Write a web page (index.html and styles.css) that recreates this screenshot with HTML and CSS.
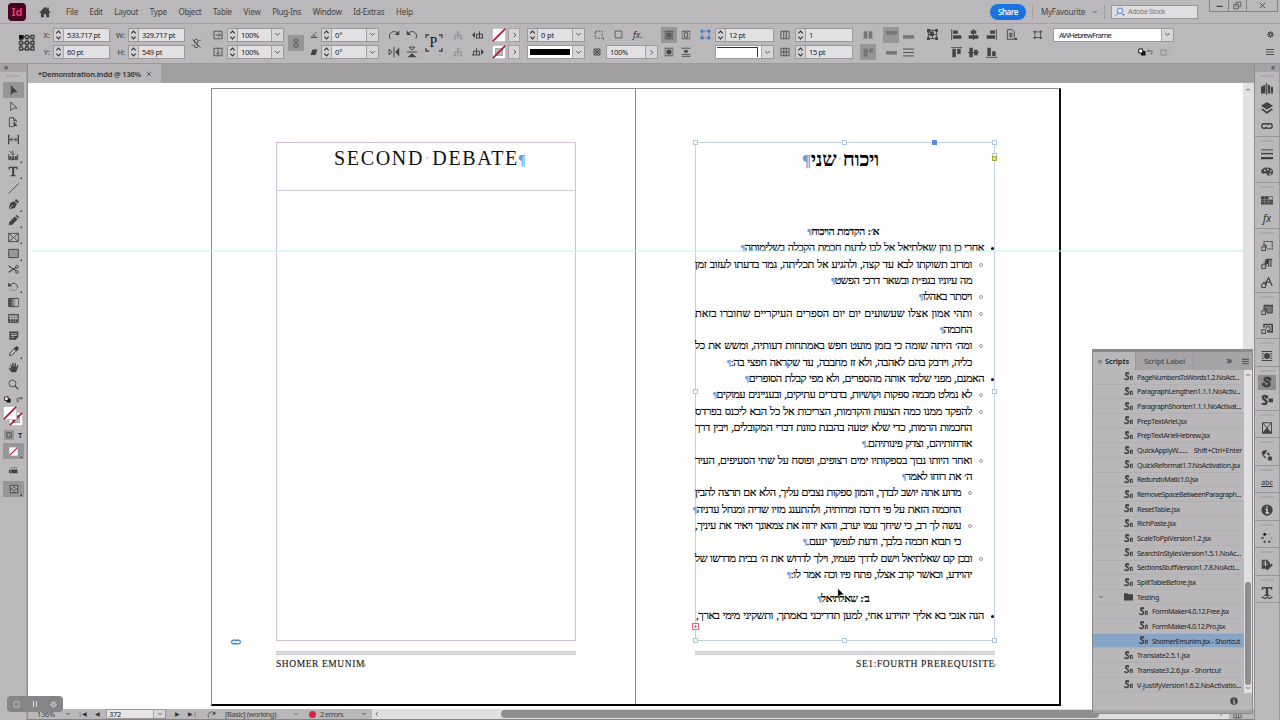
FILE: index.html
```
<!DOCTYPE html>
<html lang="en">
<head>
    <meta charset="UTF-8">
    <meta name="viewport" content="width=device-width, initial-scale=1.0">
    <title>Demonstration.indd</title>
    <link rel="stylesheet" href="styles.css">
</head>
<body>
    <svg class="defs" xmlns="http://www.w3.org/2000/svg">
        <symbol id="home" viewBox="0 0 16 16"><path class="f" d="M8 1 0 9h2.500v6H6.500v-4h3v4h4V9H16L13 6V2h-2v2z"/></symbol>
        <symbol id="down" viewBox="0 0 16 16"><path d="m3 5 5 5 5-5"/></symbol>
        <symbol id="right" viewBox="0 0 16 16"><path d="m6 3 5 5-5 5"/></symbol>
        <symbol id="up" viewBox="0 0 16 16"><path d="m3 10 5-5 5 5"/></symbol>
        <symbol id="left" viewBox="0 0 16 16"><path d="m10 3-5 5 5 5"/></symbol>
        <symbol id="spin" viewBox="0 0 10 14"><path d="m2.500 5 2.500-2.500L7.500 5M2.500 9 5 11.500 7.500 9"/></symbol>
        <symbol id="refgrid" viewBox="0 0 18 18"><path d="M3 3h12v12H3zM3 9h12M9 3v12"/><path class="w" d="M7.500 1.500h3v3h-3zM13 1.500h3v3h-3zM1.500 7.500h3v3h-3zM7.500 7.500h3v3h-3zM13 7.500h3v3h-3zM1.500 13h3v3h-3zM7.500 13h3v3h-3zM13 13h3v3h-3z"/><path class="k" d="M1 1h4.500v4.500H1z"/></symbol>
        <symbol id="unlink" viewBox="0 0 16 16"><path d="M5 7V4q0-2 2.500-2T10 4v3M5 10v2q0 2 2.500 2T10 12v-2M7.500 6v4M2 2l12 12M12 4l2-1M1 11l2-1"/></symbol>
        <symbol id="chain" viewBox="0 0 16 16"><path d="M5 7V4q0-3 3-3t3 3v3M5 9v3q0 3 3 3t3-3V9M8 5v6"/></symbol>
        <symbol id="scalex" viewBox="0 0 16 16"><path d="M1.500 2v12h13V2zM4 8h8M9 5l3 3-3 3"/></symbol>
        <symbol id="scaley" viewBox="0 0 16 16"><path d="M1.500 2v12h13V2zM8 4v8M5 9l3 3 3-3"/></symbol>
        <symbol id="angle" viewBox="0 0 16 16"><path d="M13 2 2 13h13M7 8q3 1 3 5"/></symbol>
        <symbol id="shear" viewBox="0 0 16 16"><path class="f" d="M5 3h10l-4 11H1z"/></symbol>
        <symbol id="cw" viewBox="0 0 16 16"><path d="M3 13A6 6 0 1 1 13 6"/><path class="f" d="M15 2v6H9z"/></symbol>
        <symbol id="ccw" viewBox="0 0 16 16"><path d="M13 13A6 6 0 1 0 3 6"/><path class="f" d="M1 2v6h6z"/></symbol>
        <symbol id="fliph" viewBox="0 0 16 16"><path d="M1.500 4v8l4-4zM8 1v14"/><path class="f" d="M15 2v12L9.500 8z"/></symbol>
        <symbol id="flipv" viewBox="0 0 16 16"><path d="M4 1.500h8l-4 4zM1 8h14"/><path class="f" d="M2 15h12L8 9.500z"/></symbol>
        <symbol id="pbox" viewBox="0 0 18 18"><path d="M1 4V1h3M14 1h3v3M1 14v3h3M14 17h3v-3"/></symbol>
        <symbol id="tree" viewBox="0 0 16 16"><path d="M8 2v12M3 14V8h10v6M6 4l2-2 2 2M1 14h4M11 14h4"/></symbol>
        <symbol id="treel" viewBox="0 0 16 16"><path d="M6 12V7M10 12V3M14 12V7M5 12h10M6 7h8"/><path class="f" d="M4 4v8L0 8z"/></symbol>
        <symbol id="treer" viewBox="0 0 16 16"><path d="M2 12V7M6 12V3M10 12V7M0 12h11M2 7h8"/><path class="f" d="M12 4v8l4-4z"/></symbol>
        <symbol id="none" viewBox="0 0 16 16"><path class="wh" d="M0 0h16v16H0z"/><path class="red" d="M1 15 15 1"/></symbol>
        <symbol id="nonestroke" viewBox="0 0 16 16"><path class="wh" d="M0 0h16v16H0z"/><path class="gr" d="M4 4h8v8H4z"/><path class="red" d="M1 15 15 1"/></symbol>
        <symbol id="corner" viewBox="0 0 16 16"><path stroke-dasharray="3 2" d="M2 2h11v11H2z"/><path class="f" d="M14 13h2v2h-2z"/></symbol>
        <symbol id="sq" viewBox="0 0 16 16"><path d="M2 2h12v12H2z"/></symbol>
        <symbol id="opac" viewBox="0 0 16 16"><path d="M2 2h12v12H2zM2 2l12 12M14 2 2 14M8 2v12M2 8h12"/></symbol>
        <symbol id="wrap1" viewBox="0 0 16 16"><path d="M1 2h14M1 5h14M1 8h14M1 11h14M1 14h14"/><path class="f" d="M5 5h6v6H5z" opacity=".6"/></symbol>
        <symbol id="wrap2" viewBox="0 0 16 16"><path d="M1 2h14M1 5h2M13 5h2M1 8h2M13 8h2M1 11h2M13 11h2M1 14h14M5.500 4.500h5v7h-5z"/></symbol>
        <symbol id="wrap3" viewBox="0 0 16 16"><path d="M1 2h14M1 5h3M12 5h3M1 8h2M13 8h2M1 11h3M12 11h3M1 14h14"/><circle class="f" cx="8" cy="8" r="4"/></symbol>
        <symbol id="wrap4" viewBox="0 0 16 16"><path d="M1 2h14M1 12h14M1 15h14"/><path class="f" d="M5 5h6v4H5z"/></symbol>
        <symbol id="fit" viewBox="0 0 16 16"><path stroke-dasharray="2 1" d="M3 3h10v10H3z"/><path class="f" d="M1 1h4v4H1zM11 1h4v4h-4zM1 11h4v4H1zM11 11h4v4h-4z"/></symbol>
        <symbol id="cols" viewBox="0 0 16 16"><path d="M1.500 2h13v12h-13zM6 2v12M10 2v12"/></symbol>
        <symbol id="gut" viewBox="0 0 16 16"><path d="M1.500 2h13v12h-13zM6 2v12M10 2v12M2 8h12"/></symbol>
        <symbol id="bal" viewBox="0 0 16 16"><path class="f dim" d="M1 2h6v12H1zM9 2h6v12H9z"/></symbol>
        <symbol id="bal2" viewBox="0 0 16 16"><path class="f dim" d="M1 2h6v12H1zM9 2h6v6H9z"/></symbol>
        <symbol id="vtop" viewBox="0 0 16 16"><path class="f dim" d="M0 3h16v5H0z"/></symbol>
        <symbol id="vmid" viewBox="0 0 16 16"><path class="f dim" d="M0 6h16v5H0z"/></symbol>
        <symbol id="vbot" viewBox="0 0 16 16"><path class="f dim" d="M0 9h16v5H0z"/></symbol>
        <symbol id="bars" viewBox="0 0 16 16"><path d="M0 3h16M0 8h16M0 13h16"/></symbol>
        <symbol id="autosize" viewBox="0 0 16 16"><path d="M2 2h12v12H2zM8 2v12M2 8h12"/><path class="f" d="M0 0h5v5H0zM4 4h6v6H4zM12 0h4v4h-4zM0 12h4v4H0zM12 12h4v4h-4z"/></symbol>
        <symbol id="al" viewBox="0 0 16 16"><path d="M1 0v16"/><path class="f" d="M3 2h7v5H3zM3 9h12v5H3z"/></symbol>
        <symbol id="ac" viewBox="0 0 16 16"><path d="M8 0v16"/><path class="f" d="M4 2h8v5H4zM1 9h14v5H1z"/></symbol>
        <symbol id="ar" viewBox="0 0 16 16"><path d="M15 0v16"/><path class="f" d="M6 2h7v5H6zM1 9h12v5H1z"/></symbol>
        <symbol id="at" viewBox="0 0 16 16"><path d="M0 1h16"/><path class="f" d="M2 3h5v12H2zM9 3h5v7H9z"/></symbol>
        <symbol id="am" viewBox="0 0 16 16"><path d="M0 8h16"/><path class="f" d="M2 1h5v14H2zM9 4h5v8H9z"/></symbol>
        <symbol id="ab" viewBox="0 0 16 16"><path d="M0 15h16"/><path class="f" d="M2 1h5v12H2zM9 6h5v7H9z"/></symbol>
        <symbol id="doc" viewBox="0 0 16 16"><path d="M2 1h7l3 3v11H2zM4 7h6M4 10h6M7 5v8"/><path class="f" d="M13 13h3v3h-3z"/></symbol>
        <symbol id="frame" viewBox="0 0 16 16"><path d="M3 3h9v9H3z"/><path class="f" d="M1 1h3v3H1zM11 1h3v3h-3zM1 11h3v3H1zM11 11h3v3h-3z"/></symbol>
        <symbol id="swap" viewBox="0 0 16 16"><path class="k" d="M6 6h9v9H6z"/><path fill="#fff" stroke="#111" stroke-width="2" d="M1.500 2h8v8h-8z"/></symbol>
        <symbol id="undo" viewBox="0 0 16 16"><path d="M5 2 2 5l3 3M2 5h8q4 0 4 4t-5 4"/></symbol>
        <symbol id="gear" viewBox="0 0 16 16"><circle cx="8" cy="8" r="4" stroke-width="3"/><path d="M8 0v4M8 12v4M0 8h4M12 8h4M2.500 2.500 5 5M11 11l2.500 2.500M13.500 2.500 11 5M5 11l-2.500 2.500" stroke-width="2.200"/></symbol>
        <symbol id="search" viewBox="0 0 16 16"><circle cx="8" cy="6" r="4.500"/><path d="m5 9-4 5"/><path class="f" d="M11 11h5l-2.500 3z"/></symbol>
        <symbol id="min" viewBox="0 0 16 16"><path stroke-width="3" d="M1 10h14"/></symbol>
        <symbol id="restore" viewBox="0 0 16 16"><path d="M1.500 6h8v8h-8zM6 6V2h8v8h-4M4 9h3"/></symbol>
        <symbol id="close" viewBox="0 0 16 16"><path d="m2 2 12 12M14 2 2 14"/></symbol>
        <!-- tools -->
        <symbol id="t-sel" viewBox="0 0 16 16"><path class="f" d="M4 0v15l4-4 6-1z"/></symbol>
        <symbol id="t-dir" viewBox="0 0 16 16"><path d="M4 1.500V14l3.500-3.500 5.500-.5z"/></symbol>
        <symbol id="t-page" viewBox="0 0 16 16"><path d="M7 14H2V1h6l4 4v3M8 1v4h4"/><path class="f" d="M8 6v9l2-2 4 0z"/></symbol>
        <symbol id="t-gap" viewBox="0 0 16 16"><path stroke-width="2" d="M1 1v14M15 1v14"/><path d="M3 8h10M6 5 3 8l3 3M10 5l3 3-3 3"/></symbol>
        <symbol id="t-cc" viewBox="0 0 16 16"><path d="M1 6v8h13V6M7 1v6M4.500 5 7 7.500 9.500 5M2 2l3 2"/><path class="f" d="M2 9h3v4H2zM6 9h3v4H6zM10 9h3v4h-3z"/></symbol>
        <symbol id="t-type" viewBox="0 0 16 16"><path class="f" d="M1 1h13v4h-1.500L12 3H9v10l2 .5V15H4v-1.500L6 13V3H3l-.5 2H1z"/></symbol>
        <symbol id="t-line" viewBox="0 0 16 16"><path d="M1 15 15 1"/></symbol>
        <symbol id="t-pen" viewBox="0 0 16 16"><path class="f" d="M1 15 3 6l6-3 4 4-3 6zM10 2l2-2 4 4-2 2z"/><path stroke="#bbb9bb" d="m2 14 5-5"/></symbol>
        <symbol id="t-pencil" viewBox="0 0 16 16"><path class="f" d="m1 15 1-5 8-8 4 4-8 8zM11 1l2-1 3 3-1 2z"/></symbol>
        <symbol id="t-xframe" viewBox="0 0 16 16"><path d="M1 2h14v12H1zM1 2l14 12M15 2 1 14"/></symbol>
        <symbol id="t-rect" viewBox="0 0 16 16"><path fill="#999" d="M1 2h14v12H1z"/></symbol>
        <symbol id="t-cut" viewBox="0 0 16 16"><path stroke-width="1.600" d="M1 3l11 7M1 12l11-7"/><circle cx="13" cy="4" r="2"/><circle cx="13" cy="11.500" r="2"/></symbol>
        <symbol id="t-rot" viewBox="0 0 16 16"><path d="M3 6a6 6 0 0 1 11 3"/><path stroke-dasharray="1.500 1.500" d="M14 9a6 6 0 0 1-11 2"/><path class="f" d="M0 2v6h6z"/></symbol>
        <linearGradient id="g"><stop offset="0" stop-color="#333"/><stop offset="1" stop-color="#ddd"/></linearGradient>
        <symbol id="t-grad" viewBox="0 0 16 16"><path fill="url(#g)" d="M1 2h14v12H1z"/></symbol>
        <symbol id="t-feather" viewBox="0 0 16 16"><path fill="#888" d="M1 2h14v12H1z"/><path stroke="#333" stroke-dasharray="2 1.500" stroke-width="3" d="M1 11h14"/><path stroke="#ddd" stroke-dasharray="2 2" d="M2 5h12M3 8h12"/></symbol>
        <symbol id="t-note" viewBox="0 0 16 16"><path class="f" d="M2 2h13v8l-4 4H2z"/><path stroke="#bbb" d="M4 5.500h9M4 8h9M4 10.500h5"/></symbol>
        <symbol id="t-drop" viewBox="0 0 16 16"><path d="m2 14 1-4 6-6 3 3-6 6z"/><path class="f" d="m8 3 5 5 1-2 2-3-3-3-3 2z"/></symbol>
        <symbol id="t-hand" viewBox="0 0 16 16"><path class="f" d="M5 15 1 9l1-1 3 2L3 4l1.500-.5L6.500 8 6 1h1.700L9 7.500 10 1.500h1.600L11.500 8 14 4l1.200.8L13 12l-1.500 3z"/></symbol>
        <symbol id="t-zoom" viewBox="0 0 16 16"><circle cx="6.500" cy="6.500" r="5"/><path stroke-width="1.800" d="m10 10 5 5"/></symbol>
        <symbol id="t-preview" viewBox="0 0 16 16"><path stroke-dasharray="2 1" d="M3 3h12"/><path class="f" d="M0 6h3v7H0zM4 6h11v7H4z"/></symbol>
        <symbol id="t-mode" viewBox="0 0 16 16"><path fill="#777" d="M2 2h12v12H2z"/><path stroke="#ddd" d="M4 6V4h2M10 4h2v2M4 10v2h2M10 12h2v-2M6 8h4"/></symbol>
        <!-- dock panels -->
        <symbol id="d-pages" viewBox="0 0 16 16"><path class="f" d="M0 5l6-3v12H0zM9 2l3 1v11H9zM13 5h3v9h-3z"/><path d="M7.500 0v16"/></symbol>
        <symbol id="d-layers" viewBox="0 0 16 16"><path class="f" d="M8 0l8 5-8 5-8-5z"/><path class="f" d="m0 10 2-1.500 6 4 6-4 2 1.500-8 5.500z"/></symbol>
        <symbol id="d-links" viewBox="0 0 16 16"><path stroke-width="1.800" d="M7 11H4q-3 0-3-3t3-3h3q2.500 0 3 2M9 5h3q3 0 3 3t-3 3H9q-2.500 0-3-2"/></symbol>
        <symbol id="d-stroke" viewBox="0 0 16 16"><path d="M0 2.500h16"/><path stroke-width="2" d="M0 7.500h16"/><path stroke-width="3" d="M0 13.500h16"/></symbol>
        <symbol id="d-color" viewBox="0 0 16 16"><path class="f" d="M8 2c6 0 8 3 8 6s-2 5-6 5c-2 0-1-2-3-3s-3 1-5 0c-4-2-1-8 6-8z"/><g fill="#bbb" stroke="none"><circle cx="5" cy="6" r="1.300"/><circle cx="9" cy="4.500" r="1.300"/><circle cx="13" cy="6.500" r="1.300"/><circle cx="12" cy="10.500" r="1.300"/></g></symbol>
        <symbol id="d-swatch" viewBox="0 0 16 16"><path class="f" d="M0 3h16v11H0z"/><path class="gr" d="M11 4h4v3h-4z"/><path stroke="#999" stroke-width=".8" d="M5 3v11M10 3v11M0 7.500h16M0 10.500h16"/></symbol>
        <symbol id="d-obj" viewBox="0 0 16 16"><path stroke-dasharray="3 1" stroke-width="1.500" d="M4 7V2h11v10H8"/><path d="M1 9h5v5H1zM3 7h4v4"/></symbol>
        <symbol id="d-para" viewBox="0 0 16 16"><path class="f" d="M15 1v1.500h-1V12h-1.500V2.500H11V12H9.500V8Q5 8 5 4.500T9 1z"/><path d="M1 9h5v5H1zM3 7h4v4"/></symbol>
        <symbol id="d-char" viewBox="0 0 16 16"><path stroke-width="1.600" d="m6 9 4-8 5 11M8 7h5"/><path d="M1 9h5v5H1zM3 7h4v4"/></symbol>
        <symbol id="d-cell" viewBox="0 0 16 16"><path fill="#777" d="M4 7V2h11v10H8V7z"/><path class="f" d="M4 1h12v2H4z"/><path d="M1 9h5v5H1zM3 7h4v4"/></symbol>
        <symbol id="d-table" viewBox="0 0 16 16"><path stroke-width="2" d="M4 6V2h11v10H8"/><path d="M7 8V5h5v5H8M1 9h5v5H1z"/></symbol>
        <symbol id="d-script" viewBox="0 0 16 16"><path stroke-width="3.600" d="M11.500 5.500C11.500 1.500 5 1.500 5 4.800s6.500 2.700 6.500 6-6 3.500-7.500 1"/><circle class="f" cx="3.500" cy="11" r="2.500"/><circle class="f" cx="11.500" cy="4" r="2.500"/></symbol>
        <symbol id="d-label" viewBox="0 0 16 16"><path stroke-width="3.200" d="M7.500 5C7.500 1.500 2.500 2 2.500 5s5.500 2.700 5 6-5 3-6 1"/><circle class="f" cx="7.500" cy="4" r="2.200"/><path class="f" d="M10 6h6v5h-6z"/></symbol>
        <symbol id="d-env" viewBox="0 0 16 16"><path d="M2 1h12v14H2z"/><path d="m2 1 12 14M14 1 2 15"/><path class="f" d="M2 15h12L8 8z"/></symbol>
        <symbol id="d-hyper" viewBox="0 0 16 16"><path class="f" d="M1 4q3-4 7-2L6 6 3 8q3 1 4 5-6-3-6-9zM9 4l3 3-1 2-3-2z"/><circle class="f" cx="12" cy="12.500" r="3"/></symbol>
        <symbol id="d-info" viewBox="0 0 16 16"><circle class="f" cx="8" cy="8" r="7.500"/><path stroke="#ccc" stroke-width="2" d="M6 7h2v5M6 12h5M8 3v2"/></symbol>
        <symbol id="d-dots" viewBox="0 0 16 16"><g stroke="none" fill="#555"><circle cx="5" cy="3" r="2" fill="#222"/><circle cx="11" cy="3" r="1.700" fill="#aaa"/><circle cx="14" cy="8" r="1.700" fill="#999"/><circle cx="11" cy="13" r="1.700"/><circle cx="5" cy="13" r="1.700"/><circle cx="2" cy="8" r="1.700"/></g></symbol>
        <symbol id="d-pre" viewBox="0 0 16 16"><path class="f" d="M1 1h7l4 4v4l-4 4H1z"/><path stroke="#bbb" d="M3 4h4M3 7h6M6 2v8"/><path stroke-width="2.500" d="m7 14 2-1 6-6"/></symbol>
        <symbol id="d-text" viewBox="0 0 16 16"><path class="f" d="M1 0h14v4h-1.500L13 2H9.500v8l2 .5V12h-7v-1.500l2-.5V2H3l-.5 2H1z"/><path stroke-width="1.400" d="M1 14.500q1.500-2 3 0t3 0 3 0 3 0 2 0"/></symbol>
        <symbol id="s-file" viewBox="0 0 16 16"><path stroke-width="2.800" d="M8 4.500C8 1 3 1.500 3 4.500s5.500 2.500 5 6-5 3.500-6 1.500"/><path stroke-width="1.800" d="M3 1.500h6M0 12h3"/><path stroke-width="2" d="M11.500 7v7M11 7.500h3.500V14"/></symbol>
        <symbol id="s-folder" viewBox="0 0 16 16"><path class="f" d="M0 2h6l1.500 2H16v11H0z"/></symbol>
    </svg>

    <div class="app">
        <header class="menubar">
            <div class="logo">Id</div>
            <svg class="i home"><use href="#home"/></svg>
            <nav class="menu">
                <a data-w="12">File</a>
                <a data-w="13">Edit</a>
                <a data-w="24">Layout</a>
                <a data-w="17">Type</a>
                <a data-w="23">Object</a>
                <a data-w="19">Table</a>
                <a data-w="17">View</a>
                <a data-w="29">Plug-Ins</a>
                <a data-w="29">Window</a>
                <a data-w="31">Id-Extras</a>
                <a data-w="17">Help</a>
            </nav>
            <button class="share"><span data-w="20">Share</span></button>
            <div class="workspace-name"><span data-w="44">MyFavourite</span><svg class="i s6"><use href="#down"/></svg></div>
            <div class="stock"><svg class="i s10"><use href="#search"/></svg><span data-w="37">Adobe Stock</span></div>
            <div class="winbtns">
                <span><svg class="i s7"><use href="#min"/></svg></span>
                <span><svg class="i s9"><use href="#restore"/></svg></span>
                <span><svg class="i s7"><use href="#close"/></svg></span>
            </div>
        </header>

        <section class="controls">
            <div class="tall ref"><svg class="i s18"><use href="#refgrid"/></svg></div>
            <label>X:</label><label>Y:</label>
            <div class="field"><svg class="spin"><use href="#spin"/></svg><span class="val" data-w="33">533.717 pt</span></div>
            <div class="field"><svg class="spin"><use href="#spin"/></svg><span class="val" data-w="16">60 pt</span></div>
            <label>W:</label><label>H:</label>
            <div class="field"><svg class="spin"><use href="#spin"/></svg><span class="val" data-w="33">329.717 pt</span></div>
            <div class="field"><svg class="spin"><use href="#spin"/></svg><span class="val" data-w="20">549 pt</span></div>
            <div class="tall"><svg class="i s11"><use href="#unlink"/></svg></div>
            <svg class="i s10"><use href="#scalex"/></svg><svg class="i s10"><use href="#scaley"/></svg>
            <div class="field"><svg class="spin"><use href="#spin"/></svg><span class="val" data-w="18">100%</span><b><svg class="i s7"><use href="#down"/></svg></b></div>
            <div class="field"><svg class="spin"><use href="#spin"/></svg><span class="val" data-w="18">100%</span><b><svg class="i s7"><use href="#down"/></svg></b></div>
            <div class="tall"><span class="pressed"><svg class="i s10"><use href="#chain"/></svg></span></div>
            <svg class="i s8"><use href="#angle"/></svg><svg class="i s8"><use href="#shear"/></svg>
            <div class="field"><svg class="spin"><use href="#spin"/></svg><span class="val">0°</span><b><svg class="i s7"><use href="#down"/></svg></b></div>
            <div class="field"><svg class="spin"><use href="#spin"/></svg><span class="val">0°</span><b><svg class="i s7"><use href="#down"/></svg></b></div>
            <i class="tall"></i>
            <svg class="i s12"><use href="#cw"/></svg><svg class="i s12"><use href="#fliph"/></svg>
            <svg class="i s12"><use href="#ccw"/></svg><svg class="i s12"><use href="#flipv"/></svg>
            <div class="tall pchar"><svg class="i s18"><use href="#pbox"/></svg><span>P</span></div>
            <svg class="i s10 faint"><use href="#tree"/></svg><svg class="i s10 faint"><use href="#tree"/></svg>
            <svg class="i s12"><use href="#treel"/></svg><svg class="i s12"><use href="#treer"/></svg>
            <i class="tall"></i>
            <div class="swatch"><svg class="i"><use href="#none"/></svg><b><svg class="i s7"><use href="#right"/></svg></b></div>
            <div class="swatch"><svg class="i"><use href="#nonestroke"/></svg><b><svg class="i s7"><use href="#right"/></svg></b></div>
            <i class="tall"></i>
            <div class="field"><svg class="spin"><use href="#spin"/></svg><span class="val" data-w="13">0 pt</span><b><svg class="i s7"><use href="#down"/></svg></b></div>
            <div class="field white"><span class="stroke-line"></span><b><svg class="i s7"><use href="#down"/></svg></b></div>
            <div class="fx"><svg class="i s10"><use href="#corner"/></svg><svg class="i s9"><use href="#sq"/></svg><em>fx.</em></div>
            <div class="opacity"><svg class="i s8"><use href="#opac"/></svg><div class="field"><span class="val" data-w="18">100%</span><b><svg class="i s7"><use href="#right"/></svg></b></div></div>
            <span class="pressed"><svg class="i s10"><use href="#wrap1"/></svg></span><svg class="i s10"><use href="#wrap3"/></svg>
            <svg class="i s10"><use href="#wrap2"/></svg><svg class="i s10"><use href="#wrap4"/></svg>
            <svg class="i s11 blue"><use href="#fit"/></svg><i></i>
            <div class="field"><svg class="spin"><use href="#spin"/></svg><span class="val" data-w="16">12 pt</span></div>
            <div class="field white"><span class="corner-line"></span><b><svg class="i s7"><use href="#down"/></svg></b></div>
            <svg class="i s10"><use href="#cols"/></svg><svg class="i s10"><use href="#gut"/></svg>
            <div class="field"><svg class="spin"><use href="#spin"/></svg><span class="val">1</span></div>
            <div class="field"><svg class="spin"><use href="#spin"/></svg><span class="val" data-w="16">15 pt</span></div>
            <svg class="i s10"><use href="#bal"/></svg><span class="pressed"><svg class="i s11"><use href="#bal2"/></svg></span>
            <span class="pressed"><svg class="i s11"><use href="#vtop"/></svg></span><svg class="i s11"><use href="#vmid"/></svg>
            <svg class="i s11"><use href="#vbot"/></svg><svg class="i s11"><use href="#bars"/></svg>
            <svg class="i s11"><use href="#autosize"/></svg><i></i>
            <svg class="i s11"><use href="#al"/></svg><svg class="i s11"><use href="#at"/></svg>
            <svg class="i s11"><use href="#ac"/></svg><svg class="i s11"><use href="#am"/></svg>
            <svg class="i s11"><use href="#ar"/></svg><svg class="i s11"><use href="#ab"/></svg>
            <svg class="i s11"><use href="#doc"/></svg><i></i>
            <svg class="i s10"><use href="#frame"/></svg><i></i>
            <div class="field white"><span class="val style" data-w="52">AWHebrewFrame</span><b><svg class="i s7"><use href="#down"/></svg></b></div>
            <div class="styleops"><svg class="i s8"><use href="#swap"/></svg><svg class="i s6"><use href="#undo"/></svg><svg class="i s7 faint"><use href="#sq"/></svg><svg class="i s4 faint"><use href="#t-line"/></svg></div>
            <i class="tall"></i>
            <svg class="i s7"><use href="#gear"/></svg><svg class="i s8"><use href="#bars"/></svg>
        </section>

        <div class="main">
            <aside class="tools">
                <div class="grip-head">»</div>
                <div class="grip"></div>
                <div class="toollist" id="tools"></div>
                <div class="mini"><svg class="i s7"><use href="#swap"/></svg><svg class="i s7 flip"><use href="#undo"/></svg></div>
                <div class="fillstroke"><svg class="i s14 back"><use href="#nonestroke"/></svg><svg class="i s14 front"><use href="#none"/></svg></div>
                <div class="mini fmt"><span><svg class="i s6"><use href="#sq"/></svg></span><strong>T</strong></div>
                <div class="toolbtn on more"><svg class="i s9"><use href="#none"/></svg></div>
                <div class="toolbtn"><svg class="i s9"><use href="#t-preview"/></svg></div>
                <div class="toolbtn on more"><svg class="i s10"><use href="#t-mode"/></svg></div>
            </aside>

            <div class="document">
                <div class="tabs"><div class="tab"><span data-w="103">*Demonstration.indd @ 136%</span><svg class="i s6"><use href="#close"/></svg></div></div>
                <div class="view">
                    <div class="canvas">
                        <div class="spread">
                            <div class="page left">
                                <div class="frame master">
                                    <h1><span data-w="185">SECOND<i>·</i>DEBATE</span><u>¶</u></h1>
                                </div>
                                <div class="rule"></div>
                                <div class="foot"><span data-w="89">SHOMER EMUNIM</span></div>
                            </div>
                            <div class="page right">
                                <div class="frame hebrew" dir="rtl" lang="he">
                                    <h2><span data-w="77">ויכוח<i>·</i>שני<u>¶</u></span></h2>
                                    <div id="story"></div>
                                    <span class="h tl"></span><span class="h tc"></span><span class="h live"></span><span class="h tr"></span>
                                    <span class="h port"></span><span class="h yellow"></span>
                                    <span class="h ml"></span><span class="h mr"></span>
                                    <span class="h over">+</span><span class="h bl"></span><span class="h bc"></span><span class="h br"></span>
                                </div>
                                <div class="rule"></div>
                                <div class="foot"><span data-w="139">SE1:FOURTH PREREQUISITE</span></div>
                            </div>
                        </div>
                        <div class="guide"></div>
                        <svg class="i s10 anchor"><use href="#d-links"/></svg>
                        <svg class="pointer" viewBox="0 0 16 16"><path d="M3 0v14l4-4 6 0z"/></svg>
                    </div>
                    <div class="vscroll"><svg class="i s6"><use href="#up"/></svg></div>
                </div>
                <footer class="status">
                    <span class="zoomv" data-w="18">136%</span>
                    <svg class="i s6"><use href="#down"/></svg>
                    <span class="nav first">|◀</span><span class="nav">◀</span>
                    <div class="pageno"><span data-w="12">372</span><b><svg class="i s6"><use href="#down"/></svg></b></div>
                    <span class="nav">▶</span><span class="nav">▶|</span>
                    <svg class="i s9 openin"><use href="#cw"/></svg>
                    <span class="profile"><span data-w="51">[Basic] (working)</span></span>
                    <svg class="i s6"><use href="#down"/></svg>
                    <span class="err"></span><span class="errs"><span data-w="23">2 errors</span></span>
                    <svg class="i s6"><use href="#down"/></svg>
                    <div class="hscroll"><svg class="i s6"><use href="#left"/></svg><div class="thumb"></div><svg class="i s6"><use href="#right"/></svg></div>
                    <svg class="i s9 split"><use href="#cols"/></svg>
                </footer>
            </div>

            <aside class="dock">
                <div class="grip-head">«</div>
                <div id="dock"></div>
            </aside>
        </div>

        <section class="panel">
            <div class="ptabs">
                <div class="ptab active"><small>◇</small><span data-w="24">Scripts</span></div>
                <div class="ptab"><span data-w="41">Script Label</span></div>
                <div class="pmore">»</div><svg class="i s7"><use href="#bars"/></svg>
            </div>
            <div class="pbody">
                <ul id="scripts"></ul>
                <div class="pscroll"><svg class="i s6"><use href="#up"/></svg><div class="pthumb"></div><svg class="i s6"><use href="#down"/></svg></div>
            </div>
            <div class="pfoot"><svg class="i s8"><use href="#d-info"/></svg></div>
            <div class="pedge"></div>
        </section>

        <div class="recorder"><svg class="i s7"><use href="#sq"/></svg><em></em><svg class="i s7"><use href="#gear"/></svg></div>
    </div>
    <script src="script.js"></script>
</body>
</html>
```
FILE: styles.css
```
*, *::before, *::after {
    box-sizing: border-box;
}
body {
    margin: 0;
    font-family: "Noto Sans", "Open Sans", sans-serif;
    font-size: 7.5px;
    color: #333;
}
.defs {
    position: absolute;
    width: 0;
    height: 0;
}
.app {
    position: relative;
    width: 1280px;
    height: 720px;
    overflow: hidden;
    display: flex;
    flex-direction: column;
    background: #bab8ba;
}
svg {
    fill: none;
    stroke: currentColor;
    stroke-width: 1.3;
    flex: none;
}
.f { fill: currentColor; stroke: none; }
.k { fill: #111; stroke: none; }
.w { fill: #bab8ba; }
.wh { fill: #fff; stroke: #777; stroke-width: 1; }
.gr { fill: #c4bcbc; stroke: #999; stroke-width: 1; }
.red { stroke: #b5173a; stroke-width: 2; }
.dim { fill: #777577; }
.i { width: 12px; height: 12px; color: #444244; }
.s4 { width: 4px; height: 4px; }
.s6 { width: 6px; height: 6px; stroke-width: 2; }
.s7 { width: 7px; height: 7px; stroke-width: 2; }
.s8 { width: 8px; height: 8px; stroke-width: 1.7; }
.s9 { width: 9px; height: 9px; }
.s10 { width: 10px; height: 10px; }
.s11 { width: 11px; height: 11px; }
.s12 { width: 12px; height: 12px; }
.s14 { width: 14px; height: 14px; }
.s18 { width: 18px; height: 18px; }
.faint { color: #868486; }
.blue { color: #3676c8; }
span, a { white-space: nowrap; }

/* menu bar */
.menubar {
    height: 24px;
    display: flex;
    align-items: center;
    border-bottom: 1px solid #a5a3a5;
    color: #444;
    font-size: 8px;
}
.logo {
    width: 18px;
    height: 18px;
    margin-left: 8px;
    border-radius: 4px;
    background: #49021f;
    color: #ff3e7c;
    font-size: 11px;
    font-weight: 600;
    line-height: 17px;
    text-align: center;
}
.home { margin-left: 13px; }
.menu {
    display: flex;
    gap: 11.6px;
    margin-left: 15px;
    width: 355px;
}
.share {
    width: 36px;
    height: 16px;
    margin-left: 569px;
    padding: 0;
    border: 0;
    border-radius: 8px;
    background: #1b73e0;
    color: #fff;
    font: 600 8px "Open Sans", sans-serif;
}
.workspace-name {
    display: flex;
    align-items: center;
    gap: 7px;
    margin-left: 6px;
    padding-left: 8px;
    width: 73px;
    height: 14px;
    border-left: 1px solid #a3a1a3;
    border-right: 1px solid #a3a1a3;
}
.stock {
    display: flex;
    align-items: center;
    gap: 3px;
    width: 87px;
    height: 14px;
    margin-left: 6px;
    padding-left: 3px;
    border: 1px solid #999;
    background: #e0dee1;
    color: #777;
    font-size: 7px;
}
.stock .i { color: #3676c8; }
.winbtns {
    display: flex;
    align-self: flex-start;
    height: 12px;
    margin-left: 11px;
    border: 1px solid #858385;
    border-top: 0;
}
.winbtns span {
    width: 18px;
    display: flex;
    align-items: center;
    justify-content: center;
}
.winbtns span + span { border-left: 1px solid #858385; }
.winbtns span:last-child { width: 31px; }

/* control panel */
.controls {
    height: 40px;
    padding: 3px 0 0 18px;
    display: grid;
    grid-template-rows: 15px 15px;
    row-gap: 2.500px;
    grid-auto-flow: column;
    grid-template-columns: 18px 17px 57px 18px 57px 23px 19px 57px 23px 14px 58px 6px 18px 18px 25px 24px 16px 6px 28px 7px 58px 76px 16px 18px 20px 59px 21px 58px 30px 16px 18px 30px 18px 17px 18px 23px 30px 121px 88px 16px;
    align-items: center;
    justify-items: center;
    border-bottom: 1px solid #9a989a;
}
.tall {
    grid-row: span 2;
    display: flex;
}
.controls label { justify-self: end; padding-right: 3px; }
.field {
    width: 100%;
    height: 14px;
    display: flex;
    align-items: stretch;
    border: 1px solid #9b999b;
    background: #e2e0e3;
    overflow: hidden;
}
.spin {
    width: 10px;
    height: 12px;
    border-right: 1px solid #a5a3a5;
    color: #333;
    background: #d2d0d3;
}
.val {
    flex: 1;
    padding-left: 3px;
    line-height: 12px;
    color: #222;
}
.field b, .swatch b, .pageno b {
    width: 12px;
    display: flex;
    align-items: center;
    justify-content: center;
    border-left: 1px solid #a5a3a5;
    background: #d8d6d9;
}
.field.white { background: #fff; }
.val.style { padding-left: 5px; }
.pressed {
    width: 16px;
    height: 16px;
    display: flex;
    align-items: center;
    justify-content: center;
    background: #979597;
    border-radius: 1px;
}
.pchar { position: relative; }
.pchar span {
    position: absolute;
    left: 5px;
    top: 0;
    font: 14px/18px "Liberation Serif", serif;
    color: #111;
}
.swatch {
    width: 28px;
    height: 14px;
    display: flex;
    justify-content: space-between;
}
.swatch .i { width: 14px; height: 14px; }
.swatch b { border: 1px solid #a5a3a5; }
.swatch b .i { width: 7px; height: 12px; }
.stroke-line {
    flex: 1;
    height: 6px;
    margin: 3px 2px;
    background: #000;
}
.corner-line {
    flex: 1;
    margin: 1px 3px 1px 1px;
    border-top: 1px solid #333;
    border-right: 1px solid #333;
}
.fx {
    width: 100%;
    display: flex;
    align-items: center;
    gap: 10px;
    padding-left: 9px;
}
.fx em { font-size: 9px; }
.opacity {
    width: 100%;
    display: flex;
    align-items: center;
    gap: 5px;
    padding: 0 3px 0 8px;
}
.styleops {
    width: 100%;
    display: flex;
    align-items: center;
    justify-content: flex-end;
    gap: 1px;
    padding-right: 2px;
}
.styleops .i:nth-child(3) { margin-left: 6px; }

/* body */
.main {
    flex: 1;
    display: flex;
    min-height: 0;
}
.grip-head {
    height: 8px;
    padding: 0 4px;
    background: #a5a3a5;
    font-size: 8px;
    line-height: 6px;
}
.tools {
    width: 28px;
    border-right: 1px solid #8f8d8f;
    box-shadow: inset -1px 0 #a5a3a5;
}
.grip {
    width: 14px;
    height: 2px;
    margin: 3px 0 5px 6px;
    background: #aba9ab;
}
.toolbtn {
    position: relative;
    width: 21px;
    height: 16.33px;
    margin-left: 3px;
    display: flex;
    align-items: center;
    justify-content: center;
}
.toolbtn.on {
    background: #979597;
    border-radius: 1px;
}
.toolbtn.more::after {
    content: "";
    position: absolute;
    right: 2px;
    bottom: 1px;
    border: 1px solid #333;
    border-left-color: transparent;
    border-top-color: transparent;
}
.mini {
    height: 10px;
    margin-top: 2px;
    display: flex;
    gap: 5px;
    padding-left: 4px;
    align-items: center;
}
.flip { transform: scaleX(-1); }
.fillstroke {
    position: relative;
    height: 20px;
    margin: 2px 0 0 3px;
}
.fillstroke svg { position: absolute; }
.back { left: 6px; top: 6px; }
.front { left: 0; top: 0; }
.fmt { margin: 3px 0; gap: 2px; height: 11px; }
.fmt span { background: #979597; padding: 2px 2px; display: flex; }
.fmt strong { padding-left: 2px; }
.mini ~ .toolbtn { margin-bottom: 3px; height: 16px; }

.document {
    flex: 1;
    min-width: 0;
    display: flex;
    flex-direction: column;
}
.tabs {
    height: 19px;
    background: #a09ea1;
    border-bottom: 1px solid #aaa;
}
.tab {
    width: 133px;
    height: 19px;
    padding-left: 10px;
    display: flex;
    align-items: center;
    gap: 5px;
    background: #b7b5b7;
    font-weight: 600;
}
.view {
    flex: 1;
    display: flex;
    min-height: 0;
}
.canvas {
    flex: 1;
    position: relative;
    background: #fff;
    overflow: hidden;
}
.vscroll {
    width: 11px;
    padding: 2px 2px;
    background: #e3e1e4;
}
.spread {
    position: absolute;
    left: 183px;
    top: 5px;
    width: 850px;
    height: 618px;
    display: flex;
    border: 1px solid #8a8a8a;
    border-right: 2px solid #111;
    border-bottom: 2px solid #000;
    background: #fff;
}
.page {
    width: 423px;
    padding: 53px 59px 0 64px;
}
.page.right {
    width: 424px;
    border-left: 1px solid #888;
    padding: 53px 64px 0 59px;
}
.frame {
    position: relative;
    width: 300px;
    height: 499px;
    border: 1px solid #d3bfd8;
}
.page u {
    color: #6a9ad8;
    text-decoration: none;
}
.master h1 {
    height: 48px;
    margin: 0;
    padding: 3px 0 0 57px;
    border-bottom: 1px solid #cfcbdd;
    font: 20px/24px "Liberation Serif", serif;
    color: #111;
    white-space: nowrap;
}
.page h1 i, .page h2 i { font-style: normal; font-weight: normal; color: #c8d4e6; }
.master h1 u { margin-left: -1px; font-size: 14px; font-weight: bold; letter-spacing: 0; }
.rule {
    width: 300px;
    height: 4px;
    margin-top: 10px;
    border: solid #cbcacd;
    border-width: 1px 0;
    background: #dddce0;
}
.foot {
    width: 300px;
    margin-top: 4px;
    font: 9.5px/11px "Liberation Serif", serif;
    color: #111;
    -webkit-text-stroke: 0.1px #111;
}
.foot::after {
    content: "›";
    display: inline-block;
    width: 0;
    margin-left: -2px;
    color: #5fd068;
}
.right .foot { text-align: right; padding-right: 2px; }

/* hebrew story */
.hebrew {
    border-color: #c3d2e4;
    font-family: "Liberation Serif", serif;
    color: #000;
}
.hebrew h2 {
    margin: 0;
    padding: 2px 115px 0 0;
    height: 80px;
    font: bold 20.5px/28px "Liberation Serif", serif;
    white-space: nowrap;
}
.hebrew h2 u { font-size: 17px; }
.line {
    position: relative;
    height: 16.33px;
    line-height: 16.33px;
    font-size: 11px;
    white-space: nowrap;
    word-spacing: .8px;
    text-align-last: justify;
    -webkit-text-stroke: 0.2px #000;
}
.line > span { display: block; }
.line u { font-size: 9px; -webkit-text-stroke: 0.2px #6a9ad8; }
.line.l0 { margin-right: 115px; font-weight: bold; font-size: 11px; -webkit-text-stroke: 0; }
.line.l0b { margin: 8px 125px 0 0; font-weight: bold; font-size: 11px; -webkit-text-stroke: 0; }
.line.l1 { margin-right: 10px; }
.line.l2 { margin-right: 22px; }
.line.l3 { margin-right: 33px; }
.line.dot::before, .line.ring::before {
    content: "";
    position: absolute;
    right: -10px;
    top: 8px;
    width: 3px;
    height: 3px;
    border-radius: 50%;
    background: #000;
}
.line.ring::before {
    right: -11px;
    top: 7px;
    width: 4px;
    height: 4px;
    background: none;
    border: 1px solid #999;
}
.h {
    position: absolute;
    width: 5px;
    height: 5px;
    background: #fff;
    border: 1px solid #b3c5da;
}
.tl { left: -3px; top: -3px; }
.tc { left: 146px; top: -3px; }
.tr { left: 296px; top: -3px; }
.live { left: 236px; top: -3px; background: #5b8dd9; border-color: #5b8dd9; }
.port { left: 296px; top: 10px; }
.yellow { left: 296px; top: 13px; background: #e8e83a; border-color: #a3a94a; }
.ml { left: -3px; top: 246px; }
.mr { left: 296px; top: 246px; }
.over { left: -4px; top: 480px; width: 7px; height: 7px; border-color: #d76a8f; color: #c22; font: bold 6px/5px "Liberation Sans", sans-serif; text-align: center; }
.bl { left: -3px; top: 495px; }
.bc { left: 146px; top: 495px; }
.br { left: 296px; top: 495px; }
.guide {
    position: absolute;
    left: 4px;
    right: 0;
    top: 167px;
    height: 2px;
    background: rgba(190, 245, 240, .55);
}
.anchor { position: absolute; left: 203px; top: 554px; color: #3579c0; }
.pointer {
    position: absolute;
    left: 808px;
    top: 505px;
    width: 10px;
    height: 11px;
    fill: #000;
    stroke: #fff;
    stroke-width: .5;
}

/* status bar */
.status {
    height: 11px;
    padding-left: 9px;
    display: flex;
    align-items: center;
    background: #b9b7b9;
    border-bottom: 1px solid #858385;
    color: #444;
}
.zoomv { width: 28px; }
.nav { width: 15px; text-align: center; font-size: 5.5px; color: #333; }
.nav.first { margin-left: 4px; }
.pageno {
    width: 60px;
    height: 10px;
    margin: 0 4px 0 1px;
    padding-left: 2px;
    display: flex;
    justify-content: space-between;
    align-items: center;
    border: 1px solid #999;
    background: #e6e4e7;
    color: #222;
}
.pageno b { align-self: stretch; }
.openin { margin: 0 9px 0 7px; }
.profile { width: 68px; }
.err {
    width: 7px;
    height: 7px;
    margin: 0 4px 0 10px;
    border-radius: 50%;
    background: #d8263f;
}
.errs { width: 41px; }
.hscroll {
    flex: 1;
    height: 10px;
    margin-left: 5px;
    padding: 0 2px;
    display: flex;
    align-items: center;
    background: #e0dee1;
}
.thumb {
    flex: none;
    width: 598px;
    height: 8px;
    margin: 0 119px 0 121px;
    border-radius: 4px;
    background: #8f8d90;
}
.split { margin: 0 12px 0 4px; }

/* dock */
.dock {
    width: 26px;
    border-left: 1px solid #8f8d8f;
    border-right: 1px solid #999;
}
.dock .grip-head { text-align: right; }
.group {
    padding-top: 3px;
    border-bottom: 1px solid #979597;
}
.group::before {
    content: "";
    display: block;
    width: 14px;
    height: 2px;
    margin: 0 0 3px 5px;
    background: #aba9ab;
}
.group div {
    height: 18.500px;
    display: flex;
    align-items: center;
    justify-content: center;
}
.group div.on {
    height: 15px;
    margin: 1.700px 3px;
    background: #8f8d8f;
}
.group .fxt { font-style: italic; font-size: 10px; }
.group .abc { font-size: 7px; text-decoration: underline; }

/* scripts panel */
.panel {
    position: absolute;
    left: 1092px;
    top: 349px;
    width: 161px;
    height: 365px;
    display: flex;
    flex-direction: column;
    border: 1px solid #8b898b;
    border-top-width: 3px;
    background: #b9b7b9;
}
.ptabs {
    height: 18px;
    display: flex;
    align-items: center;
    background: #a5a3a6;
}
.ptab {
    height: 18px;
    padding: 0 8px 0 8px;
    display: flex;
    align-items: center;
    border-right: 1px solid #999;
    color: #555;
    font-weight: 600;
}
.ptab.active { padding: 0 6px 0 5px; gap: 3px; background: #b9b7b9; color: #222; }
.ptab small { font-size: 5px; }
.pmore { margin-left: auto; padding-right: 10px; font-size: 11px; line-height: 14px; margin-top: -3px; }
.ptabs > .i { margin-right: 3px; }
.pbody {
    flex: 1;
    display: flex;
    min-height: 0;
}
#scripts {
    flex: 1;
    margin: 0;
    padding: 0;
    list-style: none;
    overflow: hidden;
}
#scripts li {
    height: 14.660px;
    padding-left: 31px;
    display: flex;
    align-items: center;
    gap: 4px;
    border-bottom: 1px solid #b1afb1;
    color: #222;
    font-size: 7.1px;
}
#scripts li.nested { padding-left: 46px; }
#scripts li.picked { background: #86a5c5; }
#scripts li.folder { padding-left: 5px; }
#scripts li.folder .s6 { margin-right: 16px; }
.pscroll {
    width: 8px;
    display: flex;
    flex-direction: column;
    align-items: center;
    background: #e0dee1;
    padding: 2px 0;
}
.pthumb {
    width: 6px;
    height: 103px;
    margin-top: auto;
    border-radius: 3px;
    background: #8f8d90;
}
.pfoot {
    height: 17px;
    padding: 4px 0 0 137px;
}
.pedge { height: 3px; background: #a5a3a5; }

.recorder {
    position: absolute;
    left: 7px;
    top: 696px;
    width: 56px;
    height: 16px;
    display: flex;
    align-items: center;
    justify-content: space-around;
    border-radius: 4px;
    background: #858587;
}
.recorder .i { color: #c0c0c2; }
.recorder em {
    width: 4px;
    height: 6px;
    border: solid #ddd;
    border-width: 0 1px;
}
```
FILE: script.js
```
const icon = (id, size) => `<svg class="i ${size}"><use href="#${id}"/></svg>`;

// toolbox: name, has flyout
const tools = [
    ['t-sel'], ['t-dir'], ['t-page'], ['t-gap'], ['t-cc', 1], ['t-type', 1], ['t-line'],
    ['t-pen', 1], ['t-pencil', 1], ['t-xframe', 1], ['t-rect', 1], ['t-cut'], ['t-rot', 1],
    ['t-grad'], ['t-feather'], ['t-note'], ['t-drop', 1], ['t-hand'], ['t-zoom']
];
document.getElementById('tools').innerHTML = tools.map(([id, more], i) =>
    `<div class="toolbtn${i === 0 ? ' on' : ''}${more ? ' more' : ''}">${icon(id, 's11')}</div>`).join('');

const dock = [
    ['d-pages', 'd-layers', 'd-links'], ['d-stroke', 'd-color'], ['d-swatch', 'fx'],
    ['d-obj', 'd-para', 'd-char'], ['d-cell', 'd-table'], ['wrap3'], ['d-script', 'd-label'],
    ['d-env'], ['d-hyper'], ['abc'], ['d-info'], ['d-dots'], ['d-pre'], ['d-text']
];
document.getElementById('dock').innerHTML = dock.map(g => '<div class="group">' + g.map(id => {
    if (id === 'fx') return '<div class="fxt">fx</div>';
    if (id === 'abc') return '<div class="abc">abc</div>';
    return `<div${id === 'd-script' ? ' class="on"' : ''}>${icon(id, 's12')}</div>`;
}).join('') + '</div>').join('');

// scripts: label, width, row kind
const scripts = [
    ['PageNumbersToWords1.2.NoAct...', 102],
    ['ParagraphLengthen1.1.1.NoActiv...', 103],
    ['ParagraphShorten1.1.1.NoActivat...', 104],
    ['PrepTextAriel.jsx', 50],
    ['PrepTextArielHebrew.jsx', 73],
    ['QuickApplyW......\u00a0\u00a0\u00a0 Shift+Ctrl+Enter', 105],
    ['QuickReformat1.7.NoActivation.jsx', 103],
    ['RedundoMatic1.0.jsx', 61],
    ['RemoveSpaceBetweenParagraph...', 104],
    ['ResetTable.jsx', 43],
    ['RichPaste.jsx', 39],
    ['ScaleToPpiVersion1.2.jsx', 74],
    ['SearchInStylesVersion1.5.1.NoAc...', 104],
    ['SectionsStuffVersion1.7.8.NoActi...', 102],
    ['SplitTableBefore.jsx', 59],
    ['Testing', 22, 'folder'],
    ['FormMaker4.0.12.Free.jsx', 77, 'nested'],
    ['FormMaker4.0.12.Pro.jsx', 73, 'nested'],
    ['ShomerEmunim.jsx - Shortcut', 88, 'nested picked'],
    ['Translate2.5.1.jsx', 53],
    ['Translate3.2.6.jsx - Shortcut', 84],
    ['V-JustifyVersion1.6.2.NoActivatio...', 104]
];
document.getElementById('scripts').innerHTML = scripts.map(([label, w, kind = '']) =>
    `<li class="${kind}">${kind === 'folder' ? icon('down', 's6') + icon('s-folder', 's9') : icon('s-file', 's9')}<span data-w="${w}">${label}</span></li>`).join('');

// story lines: class, width, text, ends paragraph
const story = [
    ['l0', 72, 'א׳: הקדמת הויכוח', 1],
    ['l1 dot', 243, 'אחרי כן נתן שאלתיאל אל לבו לדעת חכמת הקבלה בשלימותה', 1],
    ['l2 ring', 277, 'ומרוב תשוקתו לבא עד קצה, ולהגיע אל תכליתה, גמר בדעתו לעזוב זמן'],
    ['l2', 141, 'מה עיוניו בגפ״ת ובשאר דרכי הפשט', 1],
    ['l2 ring', 53, 'ויסתר באהלו', 1],
    ['l2 ring', 277, 'ותהי אמון אצלו שעשועים יום יום הספרים העיקריים שחוברו בזאת'],
    ['l2', 32, 'החכמה', 1],
    ['l2 ring', 277, 'ומה׳ היתה שומה כי בזמן מועט חפש באמתחות דעותיה, ומשש את כל'],
    ['l2', 245, 'כליה, וידבק בהם לאהבה, ולא זז מחבבה, עד שקראה חפצי בה:', 1],
    ['l1 dot', 239, 'האמנם, מפני שלמד אותה מהספרים, ולא מפי קבלת הסופרים', 1],
    ['l2 ring', 259, 'לא נמלט מכמה ספקות וקושיות, בדברים עתיקים, ובעניינים עמוקים', 1],
    ['l2 ring', 277, 'להפקד ממנו כמה הצעות והקדמות, הצריכות אל כל הבא ליכנס בפרדס'],
    ['l2', 277, 'החכמות הרמות, כדי שלא יטעה בהבנת כוונת דברי המקובלים, ויבין דרך'],
    ['l2', 110, 'אורחותיהם, וצדק פינותיהם.', 1],
    ['l2 ring', 277, 'ואחר היותו נבוך בספקותיו ימים רצופים, ופוסח על שתי הסעיפים, העיר'],
    ['l2', 70, 'ה׳ את רוחו לאמר', 1],
    ['l3 ring', 266, 'מדוע אתה יושב לבדך, והמון ספקות נצבים עליך, הלא אם תרצה להבין'],
    ['l3', 268, 'החכמה הזאת על פי דרכה ומדותיה, ולהתענג מזיו שדיה ומנחל עדניה', 1],
    ['l3 ring', 266, 'עשה לך רב, כי שיחך עמו יערב, והוא ירוה את צמאונך ויאיר את עיניך,'],
    ['l3', 158, 'כי תבוא חכמה בלבך, ודעת לנפשך ינעם.', 1],
    ['l2 ring', 277, 'ובכן קם שאלתיאל וישם לדרך פעמיו, וילך לדרוש את ה׳ בבית מדרשו של'],
    ['l2', 185, 'יהוידע, וכאשר קרב אצלו, פתח פיו וכה אמר לו:', 1],
    ['l0b', 52, 'ב׳: שאלתיאל', 1],
    ['l1 dot', 288, 'הנה אנכי בא אליך יהוידע אחי, למען תדריכני באמתך, ותשקיני מימי בארך,']
];
document.getElementById('story').innerHTML = story.map(([cls, w, text, end]) =>
    `<div class="line ${cls}"><span data-w="${w}">${text}${end ? '<u>¶</u>' : ''}</span></div>`).join('');

// track each run of text to its set width; loose story lines are left to justification
document.querySelectorAll('[data-w]').forEach(el => {
    const target = +el.dataset.w;
    const range = document.createRange();
    range.selectNodeContents(el);
    const inLine = el.parentNode.classList.contains('line');
    if (inLine) el.style.width = 'max-content';
    const natural = range.getBoundingClientRect().width;
    const loose = inLine && target > 270 && natural < target;
    if (!loose) el.style.letterSpacing = (target - natural) / el.textContent.length + 'px';
    if (inLine) el.style.width = target + 'px';
});
document.querySelectorAll('.line > span').forEach(el => {
    el.style.whiteSpace = el.scrollWidth > el.clientWidth + 1 ? 'nowrap' : 'normal';
});
```
